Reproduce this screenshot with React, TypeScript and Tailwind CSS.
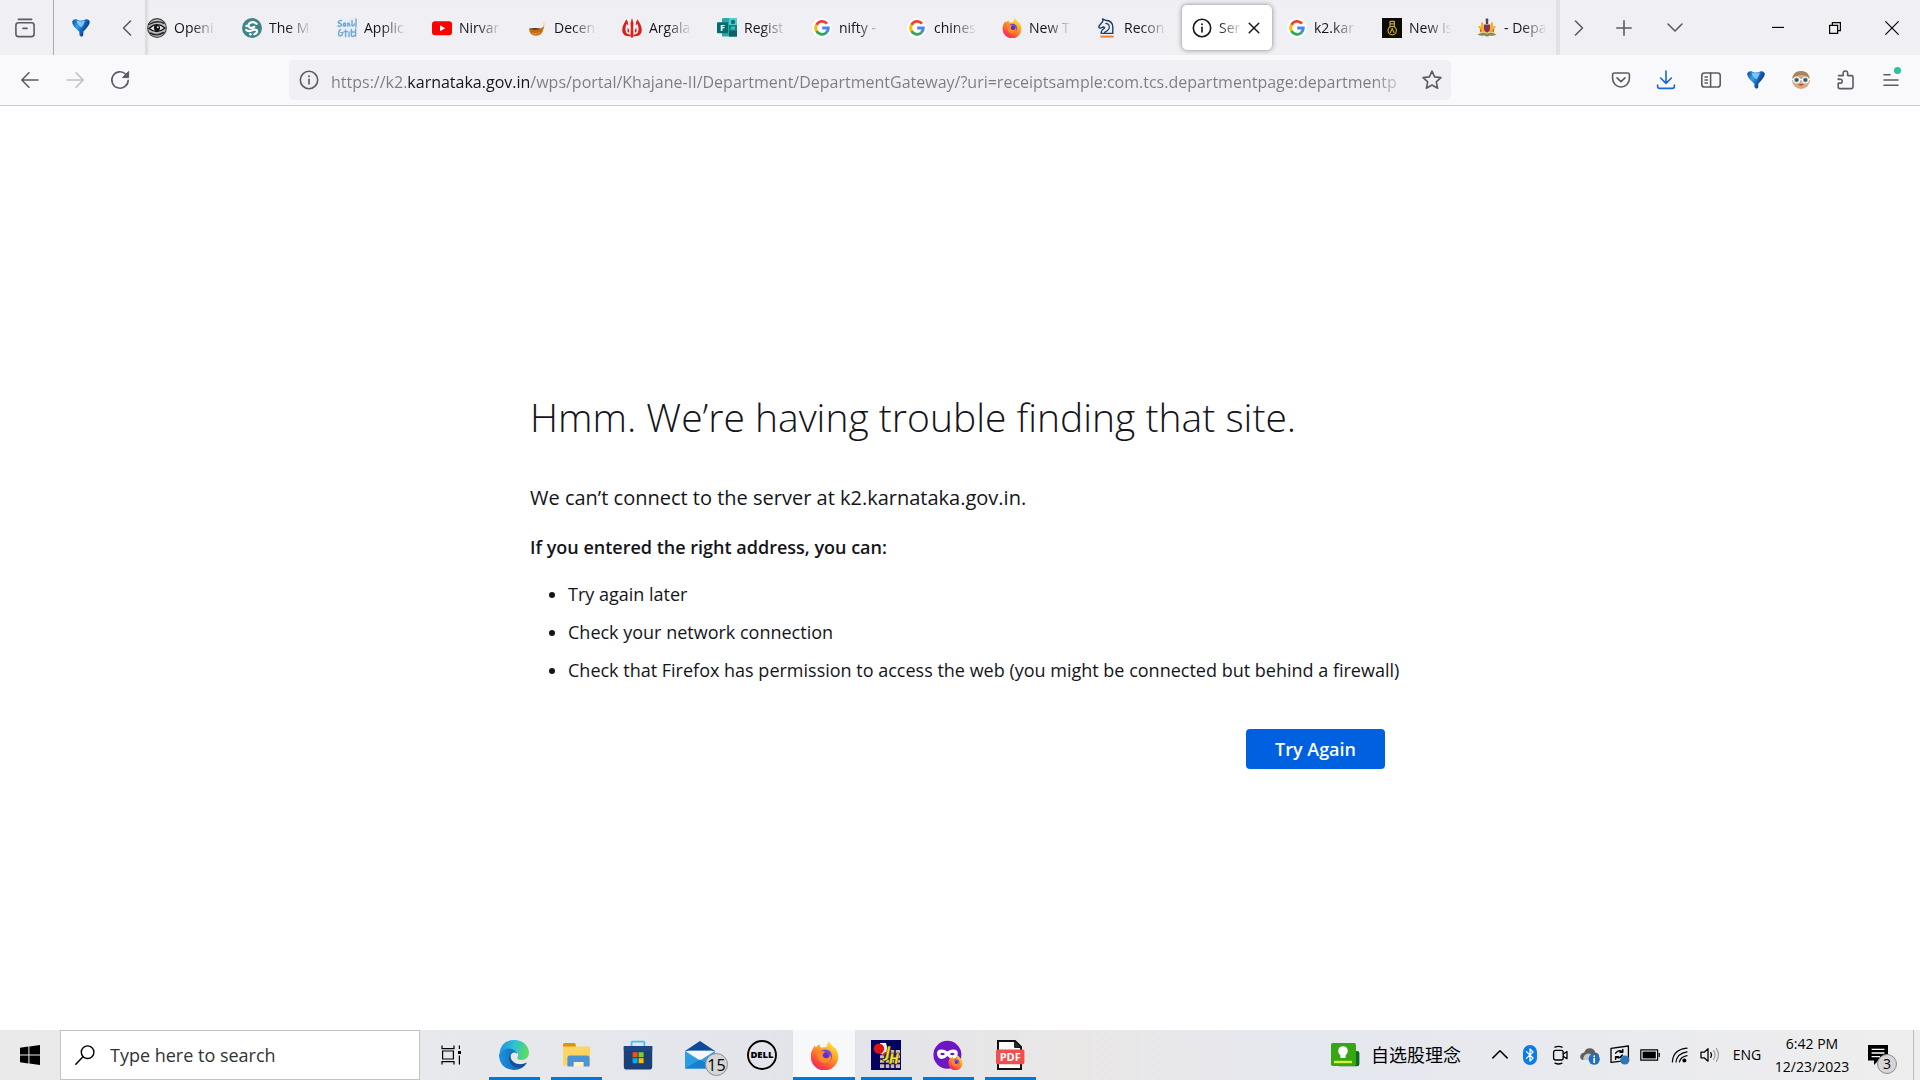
import type { ReactNode } from "react";

const ADDRESS =
  "https://k2.karnataka.gov.in/wps/portal/Khajane-II/Department/DepartmentGateway/?uri=receiptsample:com.tcs.departmentpage:departmentp";

function Glyph({ children, className = "size-5" }: { children: ReactNode; className?: string }) {
  return (
    <svg
      viewBox="0 0 20 20"
      className={`${className} shrink-0`}
      fill="none"
      stroke="currentColor"
      strokeWidth="1.6"
      strokeLinecap="round"
      strokeLinejoin="round"
      aria-hidden="true"
    >
      {children}
    </svg>
  );
}

function Funnel() {
  return (
    <Glyph>
      <defs>
        <linearGradient id="funnel" x1="0" x2="1" y1="0" y2=".5">
          <stop offset="0" stopColor="#0f3f9a" />
          <stop offset=".4" stopColor="#2fa6ea" />
          <stop offset=".65" stopColor="#1668c4" />
          <stop offset="1" stopColor="#08275e" />
        </linearGradient>
      </defs>
      <path
        d="M1.2 3.4Q2.2 1 5.4 1.3Q7.6 2.6 10 2.6Q12.4 2.6 14.8 1.3Q18 1 18.8 3.4Q19 6 16.4 9Q14.2 12 12.4 13.4L12.2 17.6Q10.4 19.8 8.6 17.6L8.2 13.4Q5.6 11.8 3.4 9Q1 6 1.2 3.4Z"
        fill="url(#funnel)"
        stroke="none"
      />
      <path d="M5.4 2.2Q10 4.4 14 2.6Q13.4 6 10.6 9.6Q6.6 7 5.4 2.2Z" fill="#b5e4fc" opacity=".65" stroke="none" />
    </Glyph>
  );
}

function Google() {
  return (
    <Glyph>
      <circle cx="10" cy="10" r="10" fill="#fff" stroke="none" />
      <g strokeWidth="2.9" strokeLinecap="butt">
        <path d="M15 5.6A6.3 6.3 0 0 0 4.5 7" stroke="#ea4335" />
        <path d="M4.6 6.8A6.3 6.3 0 0 0 4.6 13.2" stroke="#fbbc05" />
        <path d="M4.5 13A6.3 6.3 0 0 0 14.3 14.7" stroke="#34a853" />
        <path d="M14.1 14.9A6.3 6.3 0 0 0 16.3 10H10.2" stroke="#4285f4" strokeLinejoin="miter" />
      </g>
    </Glyph>
  );
}

function Firefox({ className = "size-5" }: { className?: string }) {
  return (
    <Glyph className={className}>
      <defs>
        <linearGradient id="fox" x1=".85" x2=".2" y1="0" y2="1">
          <stop offset="0" stopColor="#fff04a" />
          <stop offset=".35" stopColor="#ffab22" />
          <stop offset=".7" stopColor="#ff5a36" />
          <stop offset="1" stopColor="#f0156e" />
        </linearGradient>
      </defs>
      <g stroke="none">
        <path
          d="M13 .3Q14.6 2.4 16.5 4.4Q18 4.8 18.2 6Q19.6 8.2 19.4 11A9.4 9.3 0 0 1 .6 11Q.4 7.3 2.3 4.8L3 3.2L4.2 4.4Q5 2.9 6.6 2.2Q6.5 3.8 7.6 4.6Q9.7 4.4 11.3 4.2Q11.6 2 13 .3Z"
          fill="url(#fox)"
        />
        <circle cx="10.6" cy="10.4" r="4.6" fill="#7545e0" />
        <path d="M5.2 7.4Q8 6.2 10.8 7.8Q10.8 9 8.9 9.2Q8.7 11.7 11.4 11.9Q13.6 11.5 13.9 9.2Q15.8 12.6 12.6 14.7Q8.6 16.4 6 13Q4.6 10.4 5.2 7.4Z" fill="#ff8a2a" />
        <path d="M8.8 9.2Q8.6 11.5 11 11.9Q12.6 11.8 13.2 10.6Q12.2 8 10.6 7.6Z" fill="#5b2fc9" />
      </g>
    </Glyph>
  );
}

function Info() {
  return (
    <Glyph>
      <circle cx="10" cy="10" r="8.7" />
      <path d="M10 9.3V14" />
      <path d="M10 6.1V6.3" strokeWidth="1.9" />
    </Glyph>
  );
}

const EyeIcon = (
  <Glyph>
    <circle cx="10" cy="10" r="9.3" fill="#bdbdbd" stroke="#444" strokeWidth="1.2" />
    <path d="M2 6.5Q9 1.6 17 5.2M3.4 15Q10 18.8 16.6 14.5" stroke="#2a2a2a" strokeWidth="1.5" />
    <path d="M2 10.5Q9.5 3.2 18 10Q10 16.8 2 10.5Z" fill="#e6e6e6" stroke="#111" strokeWidth="1.2" />
    <circle cx="10" cy="10" r="3.1" fill="#111" stroke="none" />
    <circle cx="10.8" cy="9.2" r="1" fill="#ddd" stroke="none" />
  </Glyph>
);

const GlobeIcon = (
  <Glyph>
    <circle cx="10" cy="10" r="10" fill="#3f8687" stroke="none" />
    <g stroke="#fff" strokeWidth="2.2">
      <path d="M14.6 5.8Q11.4 3 7.8 5Q5.2 7.4 7.6 9.4Q10 10.6 12.2 8.8" />
      <path d="M4.2 12Q6.8 13.6 9 12.8Q12.4 10.6 14.8 12.2Q16 14.6 12.4 16.2" />
    </g>
    <circle cx="4.6" cy="8" r="1.3" fill="#fff" stroke="none" />
    <circle cx="8.4" cy="16.3" r="1.3" fill="#fff" stroke="none" />
  </Glyph>
);

const SketchIcon = (
  <Glyph>
    <rect width="20" height="20" fill="#e6eef6" stroke="none" />
    <g stroke="#74a6d0" strokeWidth="1.4">
      <path d="M4.6 2.4Q1 2.4 1.4 4.8Q4.6 5.4 4.4 7.6Q3 9 1 7.8" />
      <path d="M7.6 5Q5.8 5.6 6.6 8Q8.4 8.2 8.6 5.4V8M10.8 8V5.4Q12.8 4.8 12.8 8M15 2.5V7.6Q17 8.4 17.4 6M19 1V9" />
      <path d="M3.6 11.6Q1 13 2 17.6Q4.6 18.6 5.6 16M4 14.6H6M8.6 12V18.6M7 13.6H10.4M12 14V18.6M14.4 11.4V18Q16 19 17.6 17.4M14 14H18.4M18.6 11V18" />
    </g>
  </Glyph>
);

const YouTubeIcon = (
  <Glyph>
    <rect y="3.2" width="20" height="14" rx="3" fill="#f00" stroke="none" />
    <path d="M8 7.2V13.2L13.2 10.2Z" fill="#fff" stroke="none" />
  </Glyph>
);

const LampIcon = (
  <Glyph>
    <path d="M2 10.4Q2.6 17.6 8.8 17.8Q15 17.6 16.2 11.8L17.4 7.4Q14.8 11 9 11Q5 11 2 10.4Z" fill="#c06c12" stroke="none" />
    <path d="M2 10.4Q8 9.4 13.8 10.4Q8.6 13 2 10.4Z" fill="#5a3411" stroke="none" />
    <path d="M16.8 3.6Q18.8 6.4 16.8 8.8Q15.2 7.2 16.8 3.6Z" fill="#ffd98a" stroke="none" />
    <path d="M5 15Q8.6 17 12.6 14.6" stroke="#e79a34" strokeWidth="1.1" />
  </Glyph>
);

const TridentIcon = (
  <Glyph>
    <g fill="#d6231d" stroke="none">
      <path d="M4.6 1.2Q-1 9 .6 14.4Q2.4 18.6 8.2 18.2V16.4Q4.2 16.2 3.6 12.4Q3.2 8.6 4.6 6L6.4 7.6Q6.4 4 4.6 1.2Z" />
      <path d="M15.4 1.2Q21 9 19.4 14.4Q17.6 18.6 11.8 18.2V16.4Q15.8 16.2 16.4 12.4Q16.8 8.6 15.4 6L13.6 7.6Q13.6 4 15.4 1.2Z" />
      <path d="M10 0Q12.4 5 11.2 10L11.6 18.4L10 20L8.4 18.4L8.8 10Q7.6 5 10 0Z" />
      <path d="M5.8 9.4Q7.8 11.4 7 15L5.4 13.4ZM14.2 9.4Q12.2 11.4 13 15L14.6 13.4Z" />
    </g>
  </Glyph>
);

const FormsIcon = (
  <Glyph>
    <g stroke="none">
      <rect x="5" y="0" width="15" height="18.6" rx="1.2" fill="#2aa7a8" />
      <rect x="12" y="0" width="8" height="7" fill="#52cfcd" />
      <rect x="12" y="7" width="8" height="6" fill="#168083" />
      <rect x="12" y="13" width="8" height="5.6" fill="#0d6367" />
      <circle cx="16" cy="4" r="2.2" fill="#0d7377" />
      <rect x="14" y="8.6" width="4" height="3" fill="#37bdbd" />
      <rect y="4.2" width="11" height="11" rx="1" fill="#036c70" />
      <text x="5.5" y="13" textAnchor="middle" fontSize="9" fontWeight="700" fill="#fff">
        F
      </text>
    </g>
  </Glyph>
);

const KnightIcon = (
  <Glyph>
    <path
      d="M4.2 15.4Q3.8 12.6 7.6 10L6.6 8.8L3.4 10.2Q1 10 2.2 7.8L5.8 3.4L5.6 .9L8.2 2.2Q15.8 2.4 15.8 9.4V15.4Z"
      fill="#eaf0f6"
      stroke="#1f3e63"
      strokeWidth="1.4"
    />
    <path d="M8.8 5.4Q13 6 12.2 10.2Q11.4 12.4 7.6 14.4" stroke="#1f3e63" strokeWidth="1.2" />
    <path d="M3.4 18.6H16.6" stroke="#ef7f2d" strokeWidth="2" strokeLinecap="butt" />
  </Glyph>
);

const BulbTabIcon = (
  <Glyph>
    <rect width="20" height="20" fill="#0b0b05" stroke="none" />
    <g stroke="#c9a227" strokeWidth="1.2">
      <circle cx="10.2" cy="12.6" r="4.2" />
      <path d="M8 8.4V3.4H12.4V8.4M8 5.8H12.4M8.4 14.4L10.2 10.4L12 14.4" />
    </g>
  </Glyph>
);

const EmblemIcon = (
  <Glyph>
    <g stroke="none">
      <path d="M2.6 14.6Q4.4 10.6 .6 8.4Q2.6 7.6 4.2 8.6Q3.4 5.6 4.8 3.6Q6.6 5 6.8 8H13.2Q13.4 5 15.2 3.6Q16.6 5.6 15.8 8.6Q17.4 7.6 19.4 8.4Q15.6 10.6 17.4 14.6Z" fill="#eeb02b" />
      <path d="M7 6.6H13V11Q12.8 13.4 10 14.8Q7.2 13.4 7 11Z" fill="#a8283a" />
      <circle cx="10" cy="10" r="1.9" fill="#474a86" />
      <path d="M.4 16.8Q4.4 13.4 10 15.4Q15.6 13.4 19.6 16.8Q16 18.4 12.6 17.6Q10 19.4 7.4 17.6Q4 18.4 .4 16.8Z" fill="#7d8f52" />
      <path d="M8.8 6V1.2L10 0L11.2 1.2V6Z" fill="#4a4560" />
      <path d="M2.8 10.4L4.8 12.6L3.2 14.2ZM17.2 10.4L15.2 12.6L16.8 14.2Z" fill="#d0532c" />
    </g>
  </Glyph>
);

const TABS: { title: string; icon: ReactNode; active?: boolean }[] = [
  { title: "Openi", icon: EyeIcon },
  { title: "The M", icon: GlobeIcon },
  { title: "Applic", icon: SketchIcon },
  { title: "Nirvar", icon: YouTubeIcon },
  { title: "Decen", icon: LampIcon },
  { title: "Argala", icon: TridentIcon },
  { title: "Regist", icon: FormsIcon },
  { title: "nifty -", icon: <Google /> },
  { title: "chines", icon: <Google /> },
  { title: "New T", icon: <Firefox /> },
  { title: "Recon", icon: KnightIcon },
  { title: "Ser", icon: <Info />, active: true },
  { title: "k2.kar", icon: <Google /> },
  { title: "New Is", icon: BulbTabIcon },
  { title: "- Depa", icon: EmblemIcon },
];

function Tab({ title, icon, active }: { title: string; icon: ReactNode; active?: boolean }) {
  return (
    <div className="w-[95px] shrink-0 py-[5px] pr-[3px] pl-[2px]">
      <div
        className={`flex h-full items-center gap-[7px] rounded-[5px] pl-[10px] ${
          active ? "bg-white pr-3 text-[#15141a] shadow-[0_0_5px_rgba(0,0,0,0.45)]" : "pr-2"
        }`}
      >
        <button
          role="tab"
          aria-selected={!!active}
          className="flex min-w-0 flex-1 items-center gap-[7px] text-left"
        >
          {icon}
          <span
            className={`min-w-0 flex-1 overflow-hidden text-sm whitespace-nowrap ${
              active
                ? "mask-r-from-0% mask-r-to-110%"
                : "mask-r-from-40% mask-r-to-95%"
            }`}
          >
            {title}
          </span>
        </button>
        {active && (
          <button aria-label="Close tab">
            <Glyph className="size-[12px]">
              <path d="M2 2L18 18M18 2L2 18" strokeWidth="2.4" />
            </Glyph>
          </button>
        )}
      </div>
    </div>
  );
}

function BarButton({ label, children, className = "w-[45px]" }: { label: string; children: ReactNode; className?: string }) {
  return (
    <button aria-label={label} className={`relative flex h-full shrink-0 items-center justify-center ${className}`}>
      {children}
    </button>
  );
}

function TabStrip() {
  return (
    <header className="flex h-[55px] items-stretch bg-[#f0f0f4] text-[#15141a]">
      <BarButton label="Firefox View" className="w-[54px] border-r border-[#a9a9b0] pr-[3px] text-[#5b5b66]">
        <Glyph>
          <path d="M3.4 1.4H16.6" />
          <rect x=".9" y="4.8" width="18.2" height="13.8" rx="2.6" />
          <path d="M8 10.4H12" />
        </Glyph>
      </BarButton>
      <BarButton label="Pinned tab" className="w-[54px]">
        <Funnel />
      </BarButton>
      <BarButton label="Scroll tabs left" className="w-[37px] text-[#5b5b66]">
        <Glyph>
          <path d="M13.5 3L6.5 10L13.5 17" />
        </Glyph>
      </BarButton>
      <div
        role="tablist"
        className="flex min-w-0 flex-1 justify-end overflow-hidden shadow-[inset_4px_0_2px_-1px_#dcdce0]"
      >
        {TABS.map((tab) => (
          <Tab key={tab.title} {...tab} />
        ))}
      </div>
      <div className="-ml-1 flex w-[364px] shrink-0 border-l-4 border-[#e2e2e6]">
        <BarButton label="Scroll tabs right" className="w-[38px] text-[#5b5b66]">
          <Glyph>
            <path d="M6.5 3L13.5 10L6.5 17" />
          </Glyph>
        </BarButton>
        <BarButton label="New tab" className="w-[52px] text-[#5b5b66]">
          <Glyph className="size-4">
            <path d="M10 1V19M1 10H19" strokeWidth="2" />
          </Glyph>
        </BarButton>
        <BarButton label="List all tabs" className="w-[50px] text-[#5b5b66]">
          <Glyph>
            <path d="M3 6L10 13L17 6" />
          </Glyph>
        </BarButton>
        <div className="ml-auto flex text-black">
          <BarButton label="Minimize" className="w-[57px]">
            <Glyph className="size-3">
              <path d="M0 9H20" strokeWidth="1.9" strokeLinecap="butt" />
            </Glyph>
          </BarButton>
          <BarButton label="Restore" className="w-[57px]">
            <Glyph className="size-3">
              <path d="M1 5.6H14.4V19H1ZM5.6 5.6V1H19V14.4H14.4" strokeWidth="2" strokeLinejoin="miter" />
            </Glyph>
          </BarButton>
          <BarButton label="Close" className="w-[57px]">
            <Glyph className="size-[14px]">
              <path d="M1 1L19 19M19 1L1 19" strokeWidth="1.7" />
            </Glyph>
          </BarButton>
        </div>
      </div>
    </header>
  );
}

function Toolbar() {
  return (
    <nav className="flex h-[51px] items-center border-b border-[#cccccf] bg-[#f9f9fb] px-[7px] text-[#5b5b66]">
      <BarButton label="Back">
        <Glyph>
          <path d="M18 10H2M9 2.8L1.8 10L9 17.2" />
        </Glyph>
      </BarButton>
      <BarButton label="Forward">
        <Glyph className="size-5 text-[#c0c0c5]">
          <path d="M2 10H18M11 2.8L18.2 10L11 17.2" />
        </Glyph>
      </BarButton>
      <BarButton label="Reload">
        <Glyph>
          <path d="M18.2 10.4A8.2 8.2 0 1 1 15.8 4.2" />
          <path d="M18.6 1.8V7.6H12.8Z" fill="currentColor" strokeWidth="1" />
        </Glyph>
      </BarButton>
      <div className="w-[147px] shrink" />
      <div className="flex h-10 min-w-0 flex-1 items-center rounded-[5px] bg-[#f0f0f4]">
        <BarButton label="Site information" className="w-[40px]">
          <Info />
        </BarButton>
        <input
          aria-label="Address"
          defaultValue={ADDRESS}
          className="ml-[2px] h-full min-w-0 flex-1 bg-transparent bg-linear-[90deg,#7c7b82_76px,#15141a_76px,#15141a_199px,#7c7b82_199px] bg-clip-text pt-[3px] text-base text-transparent outline-none mask-r-from-[calc(100%-40px)] mask-r-to-100%"
        />
        <BarButton label="Bookmark this page" className="w-[39px]">
          <Glyph>
            <path d="M10 1.2L12.6 6.9L18.9 7.6L14.3 11.9L15.6 18.2L10 15L4.4 18.2L5.7 11.9L1.1 7.6L7.4 6.9Z" />
          </Glyph>
        </BarButton>
      </div>
      <div className="w-[147px] shrink" />
      <BarButton label="Save to Pocket">
        <Glyph>
          <path d="M3.4 3H16.6Q18.4 3 18.4 4.8V8.6A8.4 8.4 0 0 1 1.6 8.6V4.8Q1.6 3 3.4 3Z" />
          <path d="M6 7.8L10 11.6L14 7.8" />
        </Glyph>
      </BarButton>
      <BarButton label="Downloads">
        <Glyph className="size-5 text-[#1a66dd]">
          <path d="M10 1V13M4.6 8L10 13.4L15.4 8M1.6 15V16.2Q1.6 18.4 3.8 18.4H16.2Q18.4 18.4 18.4 16.2V15" />
        </Glyph>
      </BarButton>
      <BarButton label="Sidebars">
        <Glyph>
          <rect x=".8" y="3" width="18.4" height="14" rx="2.6" />
          <path d="M9.6 3V17M4 7H6.4M4 10H6.4M4 13H6.4" />
        </Glyph>
      </BarButton>
      <BarButton label="Funnel extension">
        <Funnel />
      </BarButton>
      <BarButton label="Account">
        <Glyph>
          <g stroke="none">
            <circle cx="10" cy="10" r="9" fill="#d9a583" />
            <path d="M1.2 8.4Q2.6 1 10 1Q17.4 1 18.8 8.4L15.4 6.4Q10 3.6 4.6 6.4Z" fill="#a5855c" />
            <path d="M6.8 14.4Q10 16.6 13.2 14.4Q10 13.4 6.8 14.4Z" fill="#a34a3d" />
          </g>
          <circle cx="5.6" cy="10" r="3" fill="#5d91a0" stroke="#fff" strokeWidth="1.2" />
          <circle cx="14.4" cy="10" r="3" fill="#5d91a0" stroke="#fff" strokeWidth="1.2" />
          <path d="M8.8 9.6H11.2M0 8.8L2 9.4M20 8.8L18 9.4" stroke="#fff" strokeWidth="1.3" />
          <path d="M4.9 10H6.3M13.7 10H15.1" stroke="#20343c" strokeWidth="1.4" />
        </Glyph>
      </BarButton>
      <BarButton label="Extensions">
        <Glyph>
          <path d="M2.6 5.6H6.6Q7.4 5.6 7.2 4.6Q6.6 1 9.4 1Q12.2 1 11.6 4.6Q11.4 5.6 12.2 5.6H15.4Q17 5.6 17 7.2V17Q17 18.6 15.4 18.6H4Q2.2 18.6 2.2 17V13.8Q2.2 13 3 13.1Q6.2 13.8 6.2 11.2Q6.2 8.8 3 9.4Q2.2 9.5 2.2 8.9" />
        </Glyph>
      </BarButton>
      <BarButton label="Application menu">
        <Glyph>
          <path d="M3 4.8H9M3 10H17M3 15.2H17" />
        </Glyph>
        <span className="absolute top-3 right-3 size-[7px] rounded-full bg-[#2ac3a2]" />
      </BarButton>
    </nav>
  );
}

const ADVICE = [
  "Try again later",
  "Check your network connection",
  "Check that Firefox has permission to access the web (you might be connected but behind a firewall)",
];

function ErrorPage() {
  return (
    <main className="flex flex-1 flex-col items-center justify-center bg-white pt-[22px] text-[#15141a]">
      <div className="w-full max-w-[860px]">
        <h1 className="text-[39px] leading-[56px] font-light">Hmm. We’re having trouble finding that site.</h1>
        <p className="mt-[38px] text-xl leading-[30px]">We can’t connect to the server at k2.karnataka.gov.in.</p>
        <p className="mt-5 text-lg leading-7 font-semibold">If you entered the right address, you can:</p>
        <ul className="mt-[19px] ml-[38px] flex list-disc flex-col gap-[10px] text-lg leading-7 whitespace-nowrap">
          {ADVICE.map((item) => (
            <li key={item}>{item}</li>
          ))}
        </ul>
        <div className="mt-[45px] flex justify-end pr-[5px]">
          <button className="h-10 w-[139px] rounded bg-[#0061e0] text-lg font-semibold text-[#fbfbfe]">
            Try Again
          </button>
        </div>
      </div>
    </main>
  );
}

const EdgeIcon = (
  <svg viewBox="0 0 30 30" className="size-[30px]" aria-hidden="true">
    <defs>
      <linearGradient id="edgeTop" x1="0" x2="1" y1=".3" y2=".5">
        <stop offset="0" stopColor="#2390dc" />
        <stop offset=".5" stopColor="#2fc3cf" />
        <stop offset="1" stopColor="#5fdc5a" />
      </linearGradient>
      <linearGradient id="edgeBase" x1="0" x2="1">
        <stop offset="0" stopColor="#1b93e4" />
        <stop offset="1" stopColor="#12569f" />
      </linearGradient>
    </defs>
    <path d="M.2 14Q2 .2 15 0Q28.6.8 30 12.4Q29.6 19.4 22.6 20Q17.4 20 18.6 17.4Q20.4 13 15.6 10.2Q6 6.6.2 14Z" fill="url(#edgeTop)" />
    <path d="M.1 14.6Q3.6 7.8 10.6 8.6Q17.4 9.8 18.4 14Q14.4 10.8 11.8 15Q10.8 23 18 24.6Q23.4 25.6 27.8 22.8Q23.6 30 15 30Q.4 29-.1 14.6Z" fill="url(#edgeBase)" />
    <path d="M11 13.4Q8.6 20 12.8 25Q16.6 28.4 22 27.6Q26.6 25.4 27.8 22.6Q22.2 25.4 17 23.4Q10.6 20.6 11 13.4Z" fill="#11509b" />
  </svg>
);

const FolderIcon = (
  <svg viewBox="0 0 30 30" className="size-[30px]" aria-hidden="true">
    <path d="M2 4.6Q2 3 3.6 3H13Q14.4 3 14.8 4.6L15 8H2Z" fill="#d9950f" />
    <path d="M2 6.6H28Q29 6.6 29 7.8V24.4Q29 25.6 27.8 25.6H3.2Q2 25.6 2 24.4Z" fill="#fcd462" />
    <path d="M6.4 26.4V17.6Q6.4 15.4 8.6 15.4H26.4Q28.6 15.4 28.6 17.6V26.4H22.4V22H12.8V26.4Z" fill="#4c94d8" />
    <path d="M12.8 26.4V22H22.4V26.4Z" fill="#fff3cf" />
  </svg>
);

const StoreIcon = (
  <svg viewBox="0 0 30 30" className="size-[30px]" aria-hidden="true">
    <path d="M8.6 7V2.6Q8.6 1.6 9.6 1.6H20.4Q21.4 1.6 21.4 2.6V7" fill="none" stroke="#3cc4f1" strokeWidth="1.8" />
    <path d="M.8 6H29.2V26.4Q29.2 29.6 26 29.6H4Q.8 29.6.8 26.4Z" fill="#1b3f77" />
    <path d="M.8 6H29.2V11H.8Z" fill="#1d4684" />
    <path d="M9.6 12.2H14.6V17.2H9.6Z" fill="#f1511b" />
    <path d="M15.6 12.2H20.6V17.2H15.6Z" fill="#80cc28" />
    <path d="M9.6 18.2H14.6V23.2H9.6Z" fill="#00adef" />
    <path d="M15.6 18.2H20.6V23.2H15.6Z" fill="#fbbc09" />
  </svg>
);

const MailIcon = (
  <svg viewBox="0 0 30 30" className="size-[30px]" aria-hidden="true">
    <path d="M0 11L15 1L30 11Z" fill="#0c4a9c" />
    <path d="M2.6 10.6H27.4V22H2.6Z" fill="#f4f6f8" />
    <path d="M0 11L15 20.4L30 11V28.6H0Z" fill="#2a9de5" />
    <path d="M0 28.6L15 19.4L30 28.6Z" fill="#1680ce" />
  </svg>
);

const DellIcon = (
  <svg viewBox="0 0 30 30" className="size-[30px]" aria-hidden="true">
    <circle cx="15" cy="15" r="14" fill="none" stroke="#000" strokeWidth="1.9" />
    <text x="15" y="18.4" textAnchor="middle" fontSize="9.5" fontWeight="800" fill="#000">
      DELL
    </text>
  </svg>
);

const GameIcon = (
  <svg viewBox="0 0 30 30" className="size-[30px]" aria-hidden="true">
    <rect width="30" height="30" fill="#04045f" />
    <path d="M9 10H29V28H9Z" fill="#d4b6ac" />
    <path d="M9 14.5H29M9 19H29M9 23.6H29M14 10V28M19 10V28M24 10V28" stroke="#04045f" strokeWidth="1.5" />
    <path d="M9 3H15L17 11L11 15Z" fill="#f2f2f2" />
    <circle cx="8" cy="8.6" r="5.2" fill="#dc1414" />
    <path d="M12 15L15 12.4" stroke="#e81e1e" strokeWidth="2" />
    <g fontSize="15" fontWeight="800" fontStyle="italic" fill="#f6e21c" stroke="#111" strokeWidth=".5">
      <text x="14" y="17">J</text>
      <text x="17.6" y="23.6">H</text>
    </g>
  </svg>
);

const PrivateIcon = (
  <svg viewBox="0 0 30 30" className="size-[30px]" aria-hidden="true">
    <circle cx="14.4" cy="14.8" r="14" fill="#6f16c4" />
    <path
      d="M4 12.8Q4.4 9.2 9 9.4Q11.6 9.6 14.4 11.4Q17.2 9.6 19.8 9.4Q24.4 9.2 24.8 12.8Q24.8 18.4 20.6 19Q17 19.2 14.4 16Q11.8 19.2 8.2 19Q4 18.4 4 12.8Z"
      fill="#fff"
    />
    <path d="M7 14Q9.4 11.6 12 14Q9.4 16.4 7 14ZM16.8 14Q19.4 11.6 21.8 14Q19.4 16.4 16.8 14Z" fill="#6f16c4" />
  </svg>
);

const PdfIcon = (
  <svg viewBox="0 0 30 30" className="size-[30px]" aria-hidden="true">
    <path d="M3 1H20L26 7V29H3Z" fill="#fff" stroke="#111" strokeWidth="2" />
    <path d="M19.6 1V7.4H26Z" fill="#24352f" stroke="#111" />
    <rect x="1" y="9.6" width="28.4" height="14.6" rx="1.6" fill="#f04f50" />
    <text x="15.2" y="20.8" textAnchor="middle" fontSize="11" fontWeight="700" fill="#fff">
      PDF
    </text>
  </svg>
);

function CountBadge({ children, className }: { children: ReactNode; className: string }) {
  return (
    <span
      className={`absolute flex items-center justify-center rounded-full border border-[#8c8c8c] bg-[#d6d6d6] text-black ${className}`}
    >
      {children}
    </span>
  );
}

const APPS: { name: string; icon: ReactNode; open?: boolean; current?: boolean }[] = [
  { name: "Microsoft Edge", icon: EdgeIcon, open: true },
  { name: "File Explorer", icon: FolderIcon, open: true },
  { name: "Microsoft Store", icon: StoreIcon },
  {
    name: "Mail",
    icon: (
      <>
        {MailIcon}
        <CountBadge className="top-[23px] right-[3px] size-[23px] text-base">15</CountBadge>
      </>
    ),
  },
  { name: "Dell", icon: DellIcon },
  { name: "Firefox", icon: <Firefox className="size-[29px]" />, open: true, current: true },
  { name: "Game", icon: GameIcon, open: true },
  {
    name: "Firefox Private Browsing",
    icon: (
      <>
        {PrivateIcon}
        <span className="absolute top-[25px] left-[31px]">
          <Firefox className="size-[15px]" />
        </span>
      </>
    ),
    open: true,
  },
  { name: "PDF", icon: PdfIcon, open: true },
];

const TRAY: { name: string; icon: ReactNode }[] = [
  {
    name: "Show hidden icons",
    icon: (
      <Glyph>
        <path d="M2.4 13.4L10 5.8L17.6 13.4" strokeWidth="1.5" strokeLinecap="butt" />
      </Glyph>
    ),
  },
  {
    name: "Bluetooth",
    icon: (
      <Glyph>
        <rect x="3" y="0" width="14" height="20" rx="7" fill="#0a7be8" stroke="none" />
        <path d="M6.4 6.6L13 13L10 16V4L13 7L6.4 13.4" stroke="#fff" strokeWidth="1.3" />
      </Glyph>
    ),
  },
  {
    name: "Meet now",
    icon: (
      <Glyph>
        <g strokeWidth="1.3">
          <rect x="3.6" y="5.4" width="9.6" height="9.6" rx="2" />
          <path d="M13.2 9L17 6.6V13.8L13.2 11.4M5 2.2Q8.4 0.6 12 2.2M5 18.2Q8.4 19.8 12 18.2" />
        </g>
      </Glyph>
    ),
  },
  {
    name: "OneDrive",
    icon: (
      <Glyph>
        <path d="M3.4 15Q-.6 14.2.4 10.2Q1.6 7.6 4.2 7.6Q5.6 3 10 3.2Q14.2 3.4 15.4 7.4Q19 8 19 11V15Z" fill="#5f5f5f" stroke="none" />
        <path d="M3.4 15Q2.4 10.4 8 8.6Q12 8 13.4 15Z" fill="#c9c9c9" stroke="none" />
        <circle cx="14.2" cy="14.2" r="5.6" fill="#1f6fc4" stroke="none" />
        <path d="M14.2 13.6V17.2M14.2 11.2V11.3" stroke="#fff" strokeWidth="1.7" />
      </Glyph>
    ),
  },
  {
    name: "Sync status",
    icon: (
      <Glyph>
        <path d="M1 3.4L18.4 1V15.4L1 17.4Z" strokeWidth="1.3" />
        <path d="M5.6 8.2Q8.6 4 12.6 6.8M12.8 4.4V7.2H10M12.4 10Q9.6 14.4 5.8 12M5.6 14.4V11.6H8.2" strokeWidth="1.4" />
        <circle cx="14.8" cy="15" r="4.6" fill="#2e75b6" stroke="none" />
      </Glyph>
    ),
  },
  {
    name: "Battery",
    icon: (
      <Glyph>
        <rect x=".8" y="4.8" width="16.8" height="10.4" strokeWidth="1.2" />
        <rect x="2.6" y="6.6" width="13.2" height="6.8" fill="currentColor" stroke="none" />
        <path d="M19.2 8.4V11.6" strokeWidth="1.3" />
      </Glyph>
    ),
  },
  {
    name: "Wi-Fi",
    icon: (
      <Glyph>
        <g strokeWidth="1.2">
          <path d="M2.4 17Q3 4.6 17 3.2" />
          <path d="M6 17Q7 8.4 17 6.8" />
          <path d="M9.4 17Q10.6 11.8 17 10.6" />
        </g>
        <circle cx="14.4" cy="15.4" r="2" fill="currentColor" stroke="none" />
      </Glyph>
    ),
  },
  {
    name: "Volume",
    icon: (
      <Glyph>
        <path d="M1 7.2H4.2L8 3.8V16.2L4.2 12.8H1Z" strokeWidth="1.3" />
        <path d="M10.8 7.6Q12.4 10 10.8 12.4" strokeWidth="1.3" />
        <path d="M13.6 5.6Q16.6 10 13.6 14.4M16.4 3.6Q20.6 10 16.4 16.4" stroke="#9a9a9a" strokeWidth="1.2" />
      </Glyph>
    ),
  },
];

function Taskbar() {
  return (
    <footer className="flex h-[50px] items-stretch bg-linear-[90deg,#eaeaea_0%,#e7e8ec_28%,#e2e4ea_42%,#e9e7e6_56%,#e5e7ef_68%,#e9eaee_82%,#eeeeee_100%] text-black">
      <button aria-label="Start" className="flex w-[60px] shrink-0 items-center justify-center">
        <svg viewBox="0 0 20 20" className="size-5" fill="#000" aria-hidden="true">
          <path d="M0 2.8L8.4 1.6V9.6H0ZM9.4 1.4L20 0V9.6H9.4ZM0 10.6H8.4V18.5L0 17.3ZM9.4 10.6H20V20L9.4 18.6Z" />
        </svg>
      </button>
      <label className="flex w-[360px] min-w-0 items-center border border-[#c3c3c3] bg-white pl-[14px]">
        <Glyph>
          <circle cx="12.6" cy="7.2" r="6.3" strokeWidth="1.4" />
          <path d="M8 11.8L.8 19.2" strokeWidth="1.5" />
        </Glyph>
        <input
          aria-label="Search"
          placeholder="Type here to search"
          className="ml-[15px] h-full min-w-0 flex-1 bg-transparent text-lg outline-none placeholder:text-[#333]"
        />
      </label>
      <button aria-label="Task view" className="flex w-[63px] shrink-0 items-center justify-center pr-[2px]">
        <Glyph>
          <g strokeWidth="1.2" strokeLinecap="butt" strokeLinejoin="miter">
            <path d="M1 .4V3.6H13V.4M1.6 6H12.4V14H1.6ZM1 19.6V16.6H13V19.6M18.4.4V4M18.4 10.4V19.6" />
          </g>
          <rect x="17" y="6" width="3" height="3" fill="currentColor" stroke="none" />
        </Glyph>
      </button>
      {APPS.map(({ name, icon, open, current }) => (
        <button
          key={name}
          aria-label={name}
          className={`relative flex w-[62px] shrink-0 flex-col items-center ${current ? "bg-[#f7f8fa]" : ""}`}
        >
          <span className="flex flex-1 items-center">{icon}</span>
          {open && <span className={`absolute bottom-0 h-[3px] bg-[#0078d7] ${current ? "w-full" : "w-[51px]"}`} />}
        </button>
      ))}
      <div className="ml-auto flex shrink-0 items-stretch">
        <button className="mr-6 flex items-center gap-[11px]">
          <svg viewBox="0 0 29 24" className="h-6 w-[29px]" aria-hidden="true">
            <path d="M8 8H26Q28.4 8 28.4 10V21Q28.4 23.2 26 23.2H8Z" fill="#0c6b23" />
            <rect width="25" height="23" rx="1.8" fill="#38a512" />
            <circle cx="12" cy="8" r="4.8" fill="#fff" />
            <path d="M9.4 11H14.6V15H9.4Z" fill="#fff" />
            <path d="M3 19H21" stroke="#d8f032" strokeWidth="2.4" />
          </svg>
          <span className="pb-[2px] font-['Noto_Sans_CJK_SC',sans-serif] text-lg">自选股理念</span>
        </button>
        {TRAY.map(({ name, icon }) => (
          <button key={name} aria-label={name} className="flex w-[30px] items-center justify-center">
            {icon}
          </button>
        ))}
        <button className="w-11 text-sm">ENG</button>
        <button className="flex w-[86px] flex-col items-center justify-center text-sm leading-[23px]">
          <span>6:42 PM</span>
          <span>12/23/2023</span>
        </button>
        <button aria-label="Notifications" className="relative w-[59px] border-r border-[#bdbdbd] pl-[13px]">
          <svg viewBox="0 0 20 20" className="size-5" aria-hidden="true">
            <path d="M0 0H20V15.6H10.4L6 20V15.6H0Z" fill="#000" />
            <path d="M3.6 4.4H16.4M3.6 8H16.4M3.6 11.6H12" stroke="#fff" strokeWidth="1.4" />
          </svg>
          <CountBadge className="top-[24px] left-[22px] size-5 text-sm">3</CountBadge>
        </button>
        <div className="w-[6px]" />
      </div>
    </footer>
  );
}

export default function App() {
  return (
    <div className="flex min-h-screen flex-col bg-white font-['Open_Sans','Noto_Sans',sans-serif]">
      <TabStrip />
      <Toolbar />
      <ErrorPage />
      <Taskbar />
    </div>
  );
}
